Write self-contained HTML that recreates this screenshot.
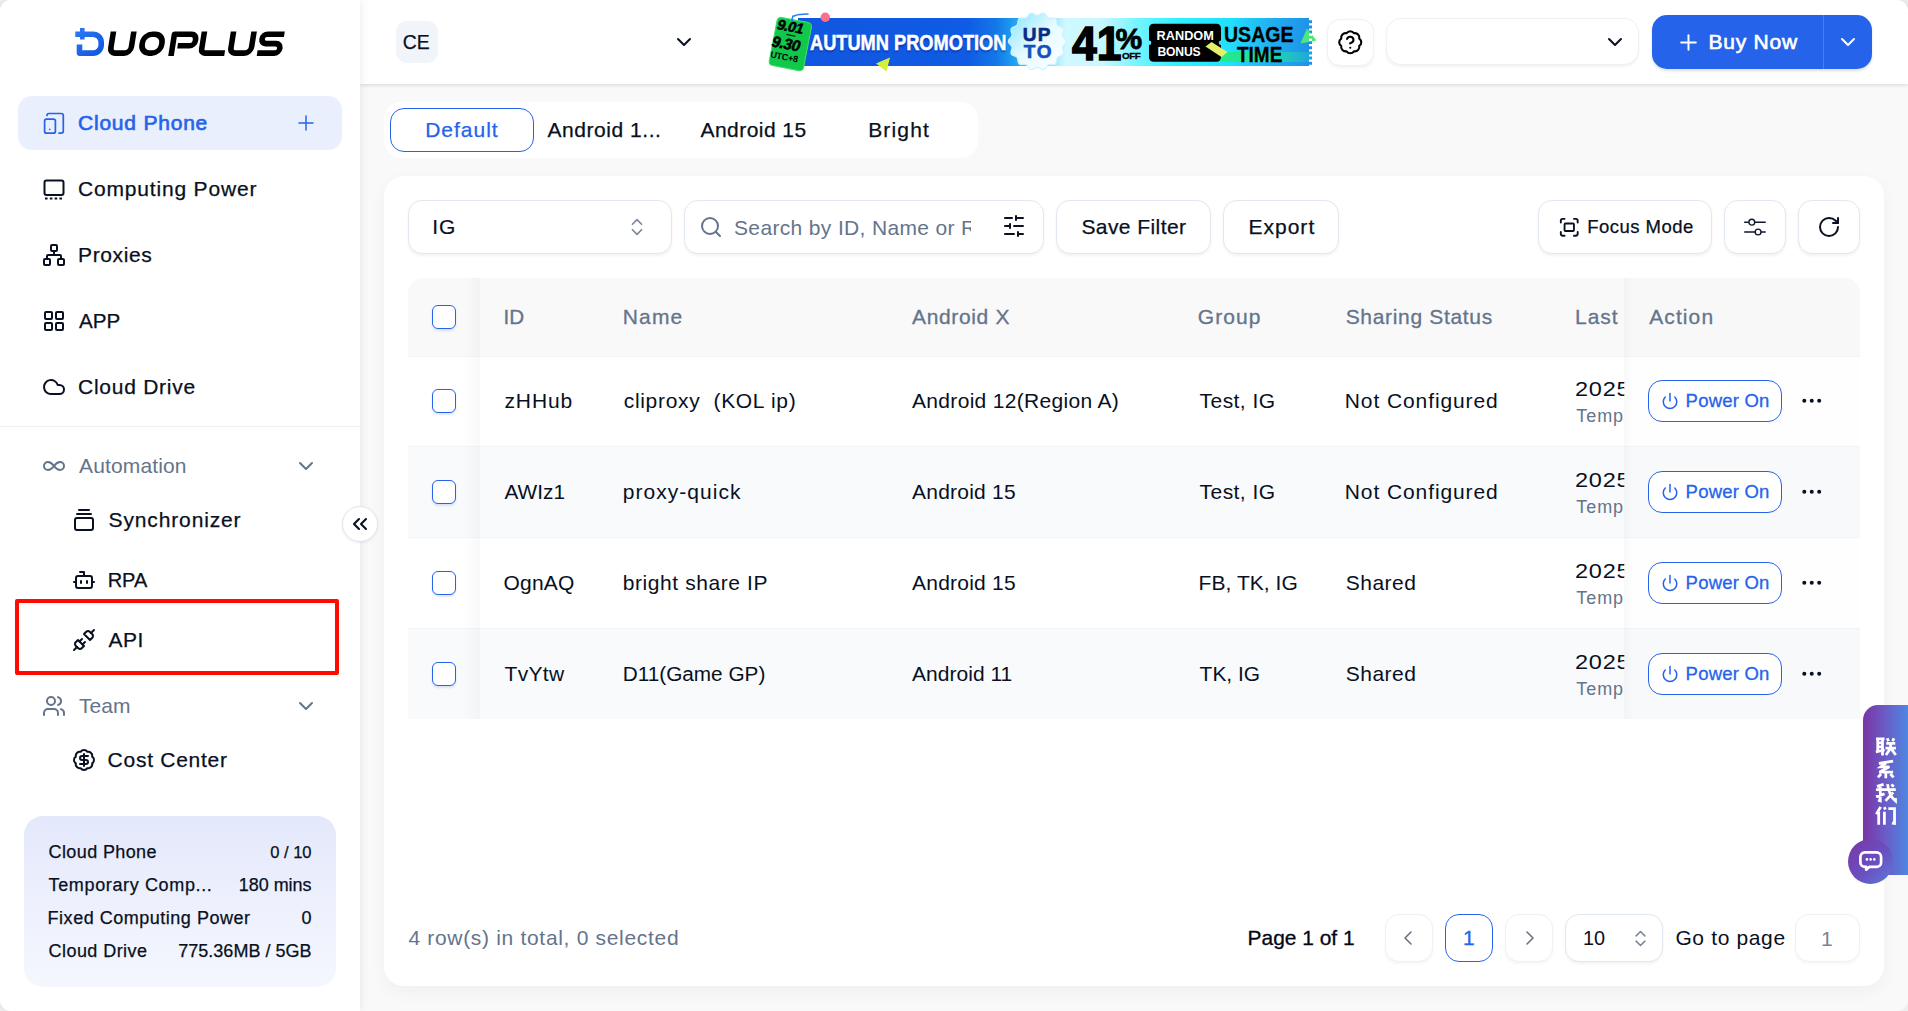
<!DOCTYPE html>
<html lang="en"><head><meta charset="utf-8"><title>DuoPlus Cloud Phone</title>
<style>
*{box-sizing:border-box;margin:0;padding:0}
html,body{width:1908px;height:1011px;overflow:hidden}
body{position:relative;background:#eeeeef;font-family:"Liberation Sans",sans-serif;color:#0f172a}
body div,body span,body svg,body aside,body header,body main,body section,body nav,body button,body footer{position:absolute;display:block}
.t{white-space:pre}
.ic{fill:none;stroke:currentColor;stroke-linecap:round;stroke-linejoin:round;overflow:visible}
.btn{background:#fff;border:1px solid #e2e8f0;border-radius:14px;box-shadow:0 1.5px 3px rgba(15,23,42,.05)}
.cb{width:24px;height:24px;border:1px solid #2563eb;border-radius:6px;background:#fff;box-shadow:0 1.5px 2px rgba(37,99,235,.15)}
</style></head>
<body>
<div style="left:0;top:0;width:1908px;height:1011px;background:#f9f9f9;border-radius:11px"></div>
<aside style="left:0;top:0;width:360px;height:1011px;z-index:2;background:#fff;border-radius:11px 0 0 11px;box-shadow:1px 0 9px rgba(0,0,0,.075)">
<svg style="left:70px;top:24px;width:224px;height:38px;overflow:visible" viewBox="70 24 224 38">
<defs><linearGradient id="lg" gradientUnits="userSpaceOnUse" x1="75" y1="28" x2="101" y2="56"><stop offset="0" stop-color="#2f7bf5"/><stop offset="1" stop-color="#0f55e0"/></linearGradient></defs>
<g fill="none" stroke="url(#lg)" stroke-width="5.6" stroke-linejoin="round">
<path d="M75.3 34.2H93a8.2 8.2 0 0 1 8.2 8.2v2.5a8.2 8.2 0 0 1-8.2 8.2H79.5V44.5"/>
<path d="M82.3 28V39.5" stroke-width="4.6"/>
</g>
<g fill="none" stroke="#000" stroke-width="5.6" stroke-linejoin="round" transform="translate(8.86 0) skewX(-9)">
<path d="M109.6 31.4V48a5 5 0 0 0 5 5.1H124a6 6 0 0 0 6-6V31.4"/>
<rect x="140.3" y="34.2" width="19.6" height="18.9" rx="8.5"/>
<path d="M171 55.9V34.2h17a5 5 0 0 1 5 5v1.5a5 5 0 0 1-5 5H176"/>
<path d="M200.6 31.4V49a4 4 0 0 0 4 4.1h19.6"/>
<path d="M229.7 31.4V48a5 5 0 0 0 5 5.1h9.5a6 6 0 0 0 6-6V31.4"/>
<path d="M280.9 34.2H263.9a4.5 4.5 0 0 0-4.5 4.5v0.4a4.5 4.5 0 0 0 4.5 4.5h10a4.7 4.7 0 0 1 4.7 4.7v0.1a4.7 4.7 0 0 1-4.7 4.7H256.7"/>
</g></svg>
<div style="left:18px;top:96px;width:324px;height:54px;background:#e9effd;border-radius:14px"></div>
<svg class="ic" style="left:42.00px;top:111.00px;width:24px;height:24px;color:#2563eb;" viewBox="0 0 24 24" stroke-width="1.7"><rect x="2.6" y="8.2" width="10.8" height="14" rx="2"/><path d="M5 4.5a2 2 0 0 1 2-2h12.3a2 2 0 0 1 2 2v15.6a2 2 0 0 1-2 2H17"/><path d="M7.7 18.3h.01"/></svg>
<span class="t" style="color:#2563eb;-webkit-text-stroke:0.65px #2563eb;font-size:21px;line-height:23px;letter-spacing:0.785px;left:78.00px;top:111.00px;">Cloud Phone</span>
<svg class="ic" style="left:294.00px;top:111.00px;width:24px;height:24px;color:#2563eb;" viewBox="0 0 24 24" stroke-width="1.5"><path d="M5 12h14"/><path d="M12 5v14"/></svg>
<svg class="ic" style="left:42.00px;top:177.00px;width:24px;height:24px;color:#081021;" viewBox="0 0 24 24" stroke-width="2"><rect x="2.5" y="3.5" width="19" height="14.5" rx="2"/><path d="M3 21.5h18" stroke-dasharray="2.6 2.2" stroke-linecap="butt"/></svg>
<span class="t" style="color:#081021;-webkit-text-stroke:0.25px #081021;font-size:21px;line-height:23px;letter-spacing:0.820px;left:78.00px;top:177.00px;">Computing Power</span>
<svg class="ic" style="left:42.00px;top:243.00px;width:24px;height:24px;color:#081021;" viewBox="0 0 24 24" stroke-width="2"><rect x="16" y="16" width="6" height="6" rx="1"/><rect x="2" y="16" width="6" height="6" rx="1"/><rect x="9" y="2" width="6" height="6" rx="1"/><path d="M5 16v-3a1 1 0 0 1 1-1h12a1 1 0 0 1 1 1v3"/><path d="M12 12V8"/></svg>
<span class="t" style="color:#081021;-webkit-text-stroke:0.25px #081021;font-size:21px;line-height:23px;letter-spacing:0.629px;left:78.00px;top:243.00px;">Proxies</span>
<svg class="ic" style="left:42.00px;top:309.00px;width:24px;height:24px;color:#081021;" viewBox="0 0 24 24" stroke-width="2"><rect width="7" height="7" x="3" y="3" rx="1"/><rect width="7" height="7" x="14" y="3" rx="1"/><rect width="7" height="7" x="14" y="14" rx="1"/><rect width="7" height="7" x="3" y="14" rx="1"/></svg>
<span class="t" style="color:#081021;-webkit-text-stroke:0.25px #081021;font-size:20.63px;line-height:23px;left:79.00px;top:309.00px;">APP</span>
<svg class="ic" style="left:42.00px;top:375.00px;width:24px;height:24px;color:#081021;" viewBox="0 0 24 24" stroke-width="2"><path d="M17.5 19H9a7 7 0 1 1 6.71-9h1.79a4.5 4.5 0 1 1 0 9Z"/></svg>
<span class="t" style="color:#081021;-webkit-text-stroke:0.25px #081021;font-size:21px;line-height:23px;letter-spacing:0.747px;left:78.00px;top:375.00px;">Cloud Drive</span>
<div style="left:0px;top:426px;width:360px;height:1px;background:#eef2f7"></div>
<svg class="ic" style="left:42.00px;top:454.00px;width:24px;height:24px;color:#64748b;" viewBox="0 0 24 24" stroke-width="2"><path d="M12 12c-2-2.67-4-4-6-4a4 4 0 1 0 0 8c2 0 4-1.33 6-4Zm0 0c2 2.67 4 4 6 4a4 4 0 0 0 0-8c-2 0-4 1.33-6 4Z"/></svg>
<span class="t" style="color:#64748b;font-size:21px;line-height:23px;letter-spacing:0.139px;left:79.00px;top:454.00px;">Automation</span>
<svg class="ic" style="left:294.00px;top:454.00px;width:24px;height:24px;color:#64748b;" viewBox="0 0 24 24" stroke-width="2"><path d="m6 9 6 6 6-6"/></svg>
<svg class="ic" style="left:72.00px;top:508.00px;width:24px;height:24px;color:#081021;" viewBox="0 0 24 24" stroke-width="2"><path d="M7 2h10"/><path d="M5 6h14"/><rect width="18" height="12" x="3" y="10" rx="2"/></svg>
<span class="t" style="color:#081021;-webkit-text-stroke:0.25px #081021;font-size:21px;line-height:23px;letter-spacing:0.858px;left:108.60px;top:508.00px;">Synchronizer</span>
<svg class="ic" style="left:72.00px;top:568.00px;width:24px;height:24px;color:#081021;" viewBox="0 0 24 24" stroke-width="2"><path d="M12 8V4H8"/><rect width="16" height="12" x="4" y="8" rx="2"/><path d="M2 14h2"/><path d="M20 14h2"/><path d="M15 13v2"/><path d="M9 13v2"/></svg>
<span class="t" style="color:#081021;-webkit-text-stroke:0.25px #081021;font-size:20.01px;line-height:22px;left:107.65px;top:569.00px;">RPA</span>
<svg class="ic" style="left:72.00px;top:628.00px;width:24px;height:24px;color:#081021;" viewBox="0 0 24 24" stroke-width="2"><path d="m19 5 3-3"/><path d="m2 22 3-3"/><path d="M6.3 20.3a2.4 2.4 0 0 0 3.4 0L12 18l-6-6-2.3 2.3a2.4 2.4 0 0 0 0 3.4Z"/><path d="M7.5 13.5 10 11"/><path d="M10.5 16.5 13 14"/><path d="m12 6 6 6 2.3-2.3a2.4 2.4 0 0 0 0-3.4l-2.6-2.6a2.4 2.4 0 0 0-3.4 0Z"/></svg>
<span class="t" style="color:#081021;-webkit-text-stroke:0.25px #081021;font-size:21px;line-height:23px;letter-spacing:0.493px;left:108.60px;top:628.00px;">API</span>
<svg class="ic" style="left:42.00px;top:694.00px;width:24px;height:24px;color:#64748b;" viewBox="0 0 24 24" stroke-width="2"><path d="M16 21v-2a4 4 0 0 0-4-4H6a4 4 0 0 0-4 4v2"/><circle cx="9" cy="7" r="4"/><path d="M22 21v-2a4 4 0 0 0-3-3.87"/><path d="M16 3.13a4 4 0 0 1 0 7.75"/></svg>
<span class="t" style="color:#64748b;font-size:21px;line-height:23px;letter-spacing:0.047px;left:79.00px;top:694.00px;">Team</span>
<svg class="ic" style="left:294.00px;top:694.00px;width:24px;height:24px;color:#64748b;" viewBox="0 0 24 24" stroke-width="2"><path d="m6 9 6 6 6-6"/></svg>
<svg class="ic" style="left:72.00px;top:748.00px;width:24px;height:24px;color:#081021;" viewBox="0 0 24 24" stroke-width="2"><path d="M3.85 8.62a4 4 0 0 1 4.78-4.77 4 4 0 0 1 6.74 0 4 4 0 0 1 4.78 4.78 4 4 0 0 1 0 6.74 4 4 0 0 1-4.77 4.78 4 4 0 0 1-6.75 0 4 4 0 0 1-4.78-4.77 4 4 0 0 1 0-6.76Z"/><path d="M16 8h-6a2 2 0 1 0 0 4h4a2 2 0 1 1 0 4H8"/><path d="M12 18V6"/></svg>
<span class="t" style="color:#081021;-webkit-text-stroke:0.25px #081021;font-size:21px;line-height:23px;letter-spacing:0.735px;left:107.60px;top:748.00px;">Cost Center</span>
<div style="left:15px;top:599px;width:324px;height:76px;border:4px solid #fe0a00;border-radius:2px"></div>
<div style="left:24px;top:816px;width:312px;height:171px;border-radius:19px;background:linear-gradient(180deg,#e3e8fb 0%,#eef1fd 55%,#f5f7fe 100%)"></div>
<span class="t" style="color:#081021;-webkit-text-stroke:0.25px #081021;font-size:18px;line-height:20px;letter-spacing:0.383px;left:48.60px;top:842.00px;">Cloud Phone</span>
<span class="t" style="color:#081021;-webkit-text-stroke:0.25px #081021;font-size:16.55px;line-height:19px;left:270.20px;top:843.00px;">0 / 10</span>
<span class="t" style="color:#081021;-webkit-text-stroke:0.25px #081021;font-size:18px;line-height:20px;letter-spacing:0.635px;left:48.60px;top:875.00px;">Temporary Comp...</span>
<span class="t" style="color:#081021;-webkit-text-stroke:0.25px #081021;font-size:17.97px;line-height:20px;left:238.70px;top:875.00px;">180 mins</span>
<span class="t" style="color:#081021;-webkit-text-stroke:0.25px #081021;font-size:18px;line-height:20px;letter-spacing:0.515px;left:47.60px;top:908.00px;">Fixed Computing Power</span>
<span class="t" style="color:#081021;-webkit-text-stroke:0.25px #081021;font-size:18px;line-height:20px;left:301.60px;top:908.00px;">0</span>
<span class="t" style="color:#081021;-webkit-text-stroke:0.25px #081021;font-size:18px;line-height:20px;letter-spacing:0.438px;left:48.60px;top:941.00px;">Cloud Drive</span>
<span class="t" style="color:#081021;-webkit-text-stroke:0.25px #081021;font-size:18px;line-height:20px;letter-spacing:0.025px;left:178.20px;top:941.00px;">775.36MB / 5GB</span>
</aside>
<div style="left:342px;top:506px;width:36px;height:36px;z-index:3;background:#fff;border:1px solid #dfe6f2;border-radius:50%;box-shadow:0 1px 3px rgba(15,23,42,.08)"></div>
<svg class="ic" style="left:348.20px;top:512.00px;width:24px;height:24px;color:#081021;z-index:3" viewBox="0 0 24 24" stroke-width="2.1"><path d="m11 17-5-5 5-5"/><path d="m18 17-5-5 5-5"/></svg>
<header style="left:0;top:0;width:0;height:0">
<div style="left:360px;top:0px;width:1548px;height:84px;background:#fff;border-radius:0 11px 0 0;box-shadow:0 1px 4px rgba(0,0,0,.15)"></div>
<div style="left:396px;top:21px;width:42px;height:42px;background:#f1f5f9;border-radius:11px"></div>
<span class="t" style="color:#081021;-webkit-text-stroke:0.25px #081021;font-size:19.39px;line-height:22px;left:402.78px;top:31.00px;">CE</span>
<svg class="ic" style="left:672.00px;top:30.00px;width:24px;height:24px;color:#081021;" viewBox="0 0 24 24" stroke-width="2"><path d="m6 9 6 6 6-6"/></svg>
<div style="left:768px;top:10px;width:548px;height:64px">
<div style="left:30px;top:8px;width:514px;height:48px;background:linear-gradient(90deg,#1257e0 0%,#0f5be3 33%,#1477e9 38.5%,#1d9af0 41.5%,#50c8f8 46%,#d0f8ff 52%,#c8f8ff 59%,#70f4ff 66.5%,#30f0ff 74%,#22e0ff 84%,#20b0f0 92%,#1e90e8 100%)"></div>
<div style="left:512px;top:41px;width:0;height:0"></div>
<div style="left:448px;top:42px;width:96px;height:10px;background:linear-gradient(90deg,#22ee88 0%,#22dd99 45%,rgba(34,200,200,.3) 100%)"></div>
<svg style="left:0;top:0;width:548px;height:64px;overflow:visible" viewBox="0 0 548 64">
<defs><linearGradient id="bg1" x1="0" y1="0" x2="1" y2="1"><stop offset="0" stop-color="#7fe3ff"/><stop offset=".5" stop-color="#e8fbff"/><stop offset="1" stop-color="#ffffff"/></linearGradient>
<linearGradient id="up1" x1="0" y1="0" x2="0" y2="1"><stop offset="0" stop-color="#081f6e"/><stop offset="1" stop-color="#1658c8"/></linearGradient></defs>
<g transform="rotate(11 22 33)"><rect x="5" y="9.5" width="35" height="49" rx="4" fill="#10c94a"/><rect x="5" y="9.5" width="35" height="49" rx="4" fill="none" stroke="#3fe06f" stroke-width="1"/></g>
<path d="M25 6c-2 4-1 9 4 10M26 6c4-2 9-2 14-2" fill="none" stroke="#2a7cf0" stroke-width="1.6" stroke-linecap="round"/>
<circle cx="57.3" cy="7.3" r="4.7" fill="#fb7088"/>
<path d="M108 53.5l14-6-3.5 14z" fill="#d8ef3a"/>
<path d="M532.5 33.5l6.5-15 9.5 12z" fill="#4fe878"/>
<path d="M298.2 31.3 L298.0 32.3 L297.5 33.3 L296.7 34.2 L295.9 35.0 L295.2 35.9 L294.7 36.7 L294.5 37.6 L294.6 38.6 L294.9 39.6 L295.3 40.8 L295.6 41.9 L295.6 43.0 L295.3 44.0 L294.6 44.8 L293.7 45.4 L292.6 45.8 L291.5 46.3 L290.5 46.7 L289.7 47.3 L289.2 48.0 L288.9 49.0 L288.7 50.1 L288.6 51.3 L288.3 52.4 L287.8 53.4 L287.1 54.1 L286.1 54.4 L285.0 54.6 L283.8 54.5 L282.6 54.4 L281.6 54.4 L280.7 54.6 L279.9 55.1 L279.2 55.8 L278.6 56.8 L277.9 57.8 L277.1 58.7 L276.3 59.3 L275.3 59.5 L274.3 59.4 L273.2 59.0 L272.1 58.4 L271.2 57.8 L270.2 57.4 L269.3 57.2 L268.4 57.4 L267.4 57.8 L266.5 58.4 L265.4 59.0 L264.3 59.4 L263.3 59.5 L262.3 59.3 L261.5 58.7 L260.7 57.8 L260.0 56.8 L259.4 55.8 L258.7 55.1 L257.9 54.6 L257.0 54.4 L256.0 54.4 L254.8 54.5 L253.6 54.6 L252.5 54.4 L251.5 54.1 L250.8 53.4 L250.3 52.4 L250.0 51.3 L249.9 50.1 L249.7 49.0 L249.4 48.0 L248.9 47.3 L248.1 46.7 L247.1 46.3 L246.0 45.8 L244.9 45.4 L244.0 44.8 L243.3 44.0 L243.0 43.0 L243.0 41.9 L243.3 40.8 L243.7 39.6 L244.0 38.6 L244.1 37.6 L243.9 36.7 L243.4 35.9 L242.7 35.0 L241.9 34.2 L241.1 33.3 L240.6 32.3 L240.4 31.3 L240.6 30.3 L241.1 29.3 L241.9 28.4 L242.7 27.6 L243.4 26.7 L243.9 25.9 L244.1 25.0 L244.0 24.0 L243.7 23.0 L243.3 21.8 L243.0 20.7 L243.0 19.6 L243.3 18.6 L244.0 17.8 L244.9 17.2 L246.0 16.8 L247.1 16.3 L248.1 15.9 L248.9 15.3 L249.4 14.6 L249.7 13.6 L249.9 12.5 L250.0 11.3 L250.3 10.2 L250.8 9.2 L251.5 8.5 L252.5 8.2 L253.6 8.0 L254.8 8.1 L256.0 8.2 L257.0 8.2 L257.9 8.0 L258.7 7.5 L259.4 6.8 L260.0 5.8 L260.7 4.8 L261.5 3.9 L262.3 3.3 L263.3 3.1 L264.3 3.2 L265.4 3.6 L266.5 4.2 L267.4 4.8 L268.4 5.2 L269.3 5.4 L270.2 5.2 L271.2 4.8 L272.1 4.2 L273.2 3.6 L274.3 3.2 L275.3 3.1 L276.3 3.3 L277.1 3.9 L277.9 4.8 L278.6 5.8 L279.2 6.8 L279.9 7.5 L280.7 8.0 L281.6 8.2 L282.6 8.2 L283.8 8.1 L285.0 8.0 L286.1 8.2 L287.1 8.5 L287.8 9.2 L288.3 10.2 L288.6 11.3 L288.7 12.5 L288.9 13.6 L289.2 14.6 L289.7 15.3 L290.5 15.9 L291.5 16.3 L292.6 16.8 L293.7 17.2 L294.6 17.8 L295.3 18.6 L295.6 19.6 L295.6 20.7 L295.3 21.8 L294.9 23.0 L294.6 24.0 L294.5 25.0 L294.7 25.9 L295.2 26.7 L295.9 27.6 L296.7 28.4 L297.5 29.3 L298.0 30.3Z" fill="url(#bg1)" stroke="#c9f3ff" stroke-width="1.2" stroke-linejoin="round"/>
<rect x="381" y="13.7" width="72" height="38" rx="4.5" fill="#000"/>
<circle cx="381" cy="32.7" r="2.3" fill="#5ff0ff"/><circle cx="453" cy="32.7" r="2.3" fill="#39d7f5"/>
<path d="M437.5 36.5l6-4.5 16 10-6 5z" fill="#e4f06a"/>
<path d="M542.5 8v48" stroke="#fff" stroke-width="3" stroke-dasharray="2.2 3" fill="none"/>
</svg>
</div>
<span class="t" style="color:#fff;font-weight:700;-webkit-text-stroke:0.5px #fff;text-shadow:0 1.5px 2px rgba(0,20,120,.45);font-size:21.5px;line-height:24px;transform:scaleX(0.8478);transform-origin:0 50%;left:809.50px;top:31.00px;">AUTUMN PROMOTION</span>
<span class="t" style="color:#0a2a86;font-weight:700;-webkit-text-stroke:0.6px #0a2a86;font-size:19px;line-height:21px;letter-spacing:1.279px;left:1022.80px;top:24.00px;">UP</span>
<span class="t" style="color:#1450bd;font-weight:700;-webkit-text-stroke:0.6px #1450bd;font-size:19px;line-height:21px;letter-spacing:1.737px;left:1023.80px;top:41.00px;">TO</span>
<span class="t" style="color:#000;font-weight:700;-webkit-text-stroke:1.6px #000;font-size:48.5px;line-height:54px;transform:scaleX(0.9174);transform-origin:0 50%;left:1071.80px;top:16.00px;">41</span>
<span class="t" style="color:#000;font-weight:700;-webkit-text-stroke:0.8px #000;font-size:30px;line-height:33px;left:1115.60px;top:22.00px;">%</span>
<span class="t" style="color:#000;font-weight:700;-webkit-text-stroke:0.3px #000;font-size:9.9px;line-height:11px;letter-spacing:-0.524px;left:1122.00px;top:50.00px;">OFF</span>
<span class="t" style="color:#fff;font-weight:700;font-size:12.72px;line-height:15px;left:1156.60px;top:28.00px;">RANDOM</span>
<span class="t" style="color:#fff;font-weight:700;font-size:12.15px;line-height:14px;letter-spacing:-0.143px;left:1157.40px;top:45.00px;">BONUS</span>
<span class="t" style="color:#000;font-weight:700;-webkit-text-stroke:0.3px #000;font-size:21.5px;line-height:24px;transform:scaleX(0.9092);transform-origin:0 50%;left:1224.09px;top:23.00px;">USAGE</span>
<span class="t" style="color:#000;font-weight:700;-webkit-text-stroke:0.3px #000;font-size:21.5px;line-height:24px;transform:scaleX(0.8821);transform-origin:0 50%;left:1237.00px;top:43.00px;">TIME</span>
<div style="left:769px;top:14px;width:44px;height:58px;transform:rotate(11deg)">
<span class="t" style="left:5px;top:6px;font-size:14.5px;line-height:14px;font-weight:700;font-style:italic;color:#000;letter-spacing:-.5px;-webkit-text-stroke:.5px #000">9.01</span>
<span style="left:16px;top:20.5px;width:9px;height:1.6px;background:#000"></span>
<span class="t" style="left:3px;top:23px;font-size:15.5px;line-height:15px;font-weight:700;font-style:italic;color:#000;letter-spacing:-.5px;-webkit-text-stroke:.5px #000">9.30</span>
<span class="t" style="left:4px;top:39.5px;font-size:9px;line-height:9px;font-weight:700;color:#000;letter-spacing:-.2px">UTC+8</span>
</div>
<div style="left:1327.3px;top:19px;width:46.5px;height:46.5px;background:#fff;border:1px solid #eef1f5;border-radius:13px;box-shadow:0 1.5px 3px rgba(15,23,42,.05)"></div>
<svg class="ic" style="left:1337.25px;top:28.95px;width:26.5px;height:26.5px;color:#000;" viewBox="0 0 24 24" stroke-width="1.9"><path d="M3.85 8.62a4 4 0 0 1 4.78-4.77 4 4 0 0 1 6.74 0 4 4 0 0 1 4.78 4.78 4 4 0 0 1 0 6.74 4 4 0 0 1-4.77 4.78 4 4 0 0 1-6.75 0 4 4 0 0 1-4.78-4.77 4 4 0 0 1 0-6.76Z"/><path d="M9.09 9a3 3 0 0 1 5.83 1c0 2-3 3-3 3"/><line x1="12" x2="12.01" y1="17" y2="17"/></svg>
<div style="left:1386.4px;top:18.2px;width:253px;height:47px;background:#fff;border:1px solid #eef1f5;border-radius:15px;box-shadow:0 1.5px 3px rgba(15,23,42,.05)"></div>
<svg class="ic" style="left:1602.70px;top:29.70px;width:24px;height:24px;color:#081021;" viewBox="0 0 24 24" stroke-width="2"><path d="m6 9 6 6 6-6"/></svg>
<div style="left:1652px;top:15px;width:220px;height:54px;background:#2563eb;border-radius:15px;box-shadow:0 2px 3px rgba(0,0,0,.13)"></div>
<div style="left:1822.5px;top:15px;width:1.5px;height:54px;background:#4b7ff0"></div>
<svg class="ic" style="left:1675.50px;top:29.50px;width:25px;height:25px;color:#fff;" viewBox="0 0 24 24" stroke-width="1.9"><path d="M5 12h14"/><path d="M12 5v14"/></svg>
<span class="t" style="color:#fff;-webkit-text-stroke:0.65px #fff;font-size:21px;line-height:23px;letter-spacing:0.772px;left:1708.50px;top:30.00px;">Buy Now</span>
<svg class="ic" style="left:1836.00px;top:29.60px;width:24px;height:24px;color:#fff;" viewBox="0 0 24 24" stroke-width="2"><path d="m6 9 6 6 6-6"/></svg>
</header>
<main style="left:0;top:0;width:0;height:0">
<div style="left:384px;top:102px;width:594px;height:56px;background:#fff;border-radius:17px"></div>
<div style="left:390px;top:108px;width:144px;height:44px;border:1px solid #2563eb;border-radius:14px;background:#fff"></div>
<span class="t" style="color:#2563eb;-webkit-text-stroke:0.25px #2563eb;font-size:21px;line-height:23px;letter-spacing:0.983px;left:425.20px;top:118.00px;">Default</span>
<span class="t" style="color:#081021;-webkit-text-stroke:0.25px #081021;font-size:21px;line-height:23px;letter-spacing:0.540px;left:547.50px;top:118.00px;">Android 1...</span>
<span class="t" style="color:#081021;-webkit-text-stroke:0.25px #081021;font-size:21px;line-height:23px;letter-spacing:0.456px;left:700.50px;top:118.00px;">Android 15</span>
<span class="t" style="color:#081021;-webkit-text-stroke:0.25px #081021;font-size:21px;line-height:23px;letter-spacing:1.155px;left:868.20px;top:118.00px;">Bright</span>
<div style="left:384px;top:176px;width:1500px;height:810px;background:#fff;border-radius:20px;box-shadow:0 6px 18px rgba(0,0,0,.04)"></div>
<div class="btn" style="left:408px;top:200px;width:264px;height:54px;"></div>
<span class="t" style="color:#081021;-webkit-text-stroke:0.2px #081021;font-size:21px;line-height:23px;letter-spacing:0.966px;left:432.20px;top:215.00px;">IG</span>
<svg class="ic" style="left:625.50px;top:216.30px;width:22px;height:22px;color:#7b8798;" viewBox="0 0 24 24" stroke-width="1.8"><path d="m7 15 5 5 5-5"/><path d="m7 9 5-5 5 5"/></svg>
<div class="btn" style="left:684px;top:200px;width:360px;height:54px;"></div>
<svg class="ic" style="left:699.00px;top:215.00px;width:24px;height:24px;color:#64748b;" viewBox="0 0 24 24" stroke-width="2"><circle cx="11" cy="11" r="8"/><path d="m21 21-4.3-4.3"/></svg>
<div style="left:733px;top:210px;width:238px;height:36px;overflow:hidden"><span class="t" style="left:1px;top:2.5px;font-size:21px;line-height:30px;color:#64748b;letter-spacing:0.35px">Search by ID, Name or Remark</span></div>
<svg class="ic" style="left:1002.00px;top:214.00px;width:24px;height:24px;color:#081021;" viewBox="0 0 24 24" stroke-width="2"><line x1="21" x2="14" y1="4" y2="4"/><line x1="10" x2="3" y1="4" y2="4"/><line x1="21" x2="12" y1="12" y2="12"/><line x1="8" x2="3" y1="12" y2="12"/><line x1="21" x2="16" y1="20" y2="20"/><line x1="12" x2="3" y1="20" y2="20"/><line x1="14" x2="14" y1="2" y2="6"/><line x1="8" x2="8" y1="10" y2="14"/><line x1="16" x2="16" y1="18" y2="22"/></svg>
<div class="btn" style="left:1056px;top:200px;width:155px;height:54px;"></div>
<span class="t" style="color:#081021;-webkit-text-stroke:0.25px #081021;font-size:21px;line-height:23px;letter-spacing:0.423px;left:1081.40px;top:215.00px;">Save Filter</span>
<div class="btn" style="left:1223px;top:200px;width:116px;height:54px;"></div>
<span class="t" style="color:#081021;-webkit-text-stroke:0.25px #081021;font-size:21px;line-height:23px;letter-spacing:1.028px;left:1248.40px;top:215.00px;">Export</span>
<div class="btn" style="left:1538px;top:200px;width:174px;height:54px;"></div>
<svg class="ic" style="left:1557.75px;top:215.75px;width:22.5px;height:22.5px;color:#081021;" viewBox="0 0 24 24" stroke-width="2"><path d="M3 7V5a2 2 0 0 1 2-2h2"/><path d="M17 3h2a2 2 0 0 1 2 2v2"/><path d="M21 17v2a2 2 0 0 1-2 2h-2"/><path d="M7 21H5a2 2 0 0 1-2-2v-2"/><rect width="10" height="8" x="7" y="8" rx="1"/></svg>
<span class="t" style="color:#081021;-webkit-text-stroke:0.25px #081021;font-size:18.5px;line-height:21px;letter-spacing:0.466px;left:1587.20px;top:216.00px;">Focus Mode</span>
<div class="btn" style="left:1724px;top:200px;width:62px;height:54px;"></div>
<svg class="ic" style="left:1743px;top:215px;width:24px;height:24px;color:#0f172a" viewBox="0 0 24 24" stroke-width="1.4"><path d="M1.7 7.2h20.5M1.7 17h20.5"/><circle cx="8.8" cy="7.2" r="2.9" fill="#fff"/><circle cx="15.1" cy="17" r="2.9" fill="#fff"/></svg>
<div class="btn" style="left:1798px;top:200px;width:62px;height:54px;"></div>
<svg class="ic" style="left:1817.00px;top:214.80px;width:24px;height:24px;color:#081021;" viewBox="0 0 24 24" stroke-width="2"><path d="M21 12a9 9 0 1 1-9-9c2.52 0 4.93 1 6.74 2.74L21 8"/><path d="M21 3v5h-5"/></svg>
<section style="left:408px;top:278px;width:1452px;height:441px;border-radius:15px 15px 0 0;overflow:hidden">
<div style="left:0;top:0;width:1452px;height:78px;background:#f9f9fa"></div>
<div style="left:0;top:78px;width:1452px;height:90px;background:#fff;border-top:1px solid #f1f4f8"></div>
<div style="left:0;top:168px;width:1452px;height:91px;background:#f8fafc;border-top:1px solid #f1f4f8"></div>
<div style="left:0;top:259px;width:1452px;height:91px;background:#fff;border-top:1px solid #f1f4f8"></div>
<div style="left:0;top:350px;width:1452px;height:91px;background:#f8fafc;border-top:1px solid #f1f4f8"></div>
</section>
<div style="left:408px;top:278px;width:72px;height:441px;border-radius:15px 0 0 0;background:linear-gradient(90deg,rgba(15,23,42,0) 0,rgba(15,23,42,0) 78%,rgba(15,23,42,.028) 100%)"></div>
<div style="left:1624.3px;top:278px;width:235.7px;height:441px;border-radius:0 15px 0 0;background:linear-gradient(90deg,rgba(15,23,42,.028) 0,rgba(15,23,42,.004) 10px,rgba(15,23,42,.004) 100%)"></div>
<span class="t" style="color:#64748b;-webkit-text-stroke:0.3px #64748b;font-size:20.65px;line-height:23px;left:503.52px;top:305.00px;">ID</span>
<span class="t" style="color:#64748b;-webkit-text-stroke:0.3px #64748b;font-size:21px;line-height:23px;letter-spacing:1.121px;left:622.80px;top:305.00px;">Name</span>
<span class="t" style="color:#64748b;-webkit-text-stroke:0.3px #64748b;font-size:21px;line-height:23px;letter-spacing:0.648px;left:912.00px;top:305.00px;">Android X</span>
<span class="t" style="color:#64748b;-webkit-text-stroke:0.3px #64748b;font-size:21px;line-height:23px;letter-spacing:1.078px;left:1197.80px;top:305.00px;">Group</span>
<span class="t" style="color:#64748b;-webkit-text-stroke:0.3px #64748b;font-size:21px;line-height:23px;letter-spacing:0.673px;left:1345.70px;top:305.00px;">Sharing Status</span>
<span class="t" style="color:#64748b;-webkit-text-stroke:0.3px #64748b;font-size:21px;line-height:23px;letter-spacing:0.981px;left:1575.00px;top:305.00px;">Last</span>
<span class="t" style="color:#64748b;-webkit-text-stroke:0.3px #64748b;font-size:21px;line-height:23px;letter-spacing:1.103px;left:1649.20px;top:305.00px;">Action</span>
<div class="cb" style="left:432px;top:305px;width:24px;height:24px;"></div>
<div class="cb" style="left:432px;top:389px;width:24px;height:24px;"></div>
<span class="t" style="color:#081021;font-size:21px;line-height:23px;letter-spacing:0.872px;left:504.50px;top:389.00px;">zHHub</span>
<span class="t" style="color:#081021;font-size:21px;line-height:23px;letter-spacing:0.692px;left:623.70px;top:389.00px;">cliproxy  (KOL ip)</span>
<span class="t" style="color:#081021;font-size:21px;line-height:23px;letter-spacing:0.318px;left:912.00px;top:389.00px;">Android 12(Region A)</span>
<span class="t" style="color:#081021;font-size:21px;line-height:23px;letter-spacing:0.440px;left:1199.60px;top:389.00px;">Test, IG</span>
<span class="t" style="color:#081021;font-size:21px;line-height:23px;letter-spacing:0.902px;left:1344.80px;top:389.00px;">Not Configured</span>
<span class="t" style="color:#081021;font-size:21px;line-height:23px;transform:scaleX(1.1200);transform-origin:0 50%;letter-spacing:0.679px;left:1575.48px;width:43.86px;overflow:hidden;top:377.00px;">2025-09</span>
<span class="t" style="color:#64748b;font-size:18px;line-height:20px;letter-spacing:0.922px;left:1576.30px;width:46.50px;overflow:hidden;top:406.00px;">Temporary</span>
<div style="left:1648px;top:379.8px;width:134px;height:42px;border:1px solid #2563eb;border-radius:14px;background:#fff"></div>
<svg class="ic" style="left:1661.00px;top:391.80px;width:18px;height:18px;color:#2563eb;" viewBox="0 0 24 24" stroke-width="2"><path d="M12 2v10"/><path d="M18.4 6.6a9 9 0 1 1-12.77.04"/></svg>
<span class="t" style="color:#2563eb;-webkit-text-stroke:0.3px #2563eb;font-size:18.5px;line-height:21px;letter-spacing:0.205px;left:1685.60px;top:390.00px;">Power On</span>
<svg class="ic" style="left:1799.25px;top:388.25px;width:25.5px;height:25.5px;color:#081021;" viewBox="0 0 24 24" stroke-width="1.8"><circle cx="12" cy="12" r="1"/><circle cx="19" cy="12" r="1"/><circle cx="5" cy="12" r="1"/></svg>
<div class="cb" style="left:432px;top:480px;width:24px;height:24px;"></div>
<span class="t" style="color:#081021;font-size:20.8px;line-height:23px;left:504.50px;top:480.00px;">AWIz1</span>
<span class="t" style="color:#081021;font-size:21px;line-height:23px;letter-spacing:1.043px;left:622.70px;top:480.00px;">proxy-quick</span>
<span class="t" style="color:#081021;font-size:21px;line-height:23px;letter-spacing:0.234px;left:912.00px;top:480.00px;">Android 15</span>
<span class="t" style="color:#081021;font-size:21px;line-height:23px;letter-spacing:0.440px;left:1199.60px;top:480.00px;">Test, IG</span>
<span class="t" style="color:#081021;font-size:21px;line-height:23px;letter-spacing:0.902px;left:1344.80px;top:480.00px;">Not Configured</span>
<span class="t" style="color:#081021;font-size:21px;line-height:23px;transform:scaleX(1.1200);transform-origin:0 50%;letter-spacing:0.679px;left:1575.48px;width:43.86px;overflow:hidden;top:468.00px;">2025-09</span>
<span class="t" style="color:#64748b;font-size:18px;line-height:20px;letter-spacing:0.922px;left:1576.30px;width:46.50px;overflow:hidden;top:497.00px;">Temporary</span>
<div style="left:1648px;top:470.8px;width:134px;height:42px;border:1px solid #2563eb;border-radius:14px;background:#fff"></div>
<svg class="ic" style="left:1661.00px;top:482.80px;width:18px;height:18px;color:#2563eb;" viewBox="0 0 24 24" stroke-width="2"><path d="M12 2v10"/><path d="M18.4 6.6a9 9 0 1 1-12.77.04"/></svg>
<span class="t" style="color:#2563eb;-webkit-text-stroke:0.3px #2563eb;font-size:18.5px;line-height:21px;letter-spacing:0.205px;left:1685.60px;top:481.00px;">Power On</span>
<svg class="ic" style="left:1799.25px;top:479.25px;width:25.5px;height:25.5px;color:#081021;" viewBox="0 0 24 24" stroke-width="1.8"><circle cx="12" cy="12" r="1"/><circle cx="19" cy="12" r="1"/><circle cx="5" cy="12" r="1"/></svg>
<div class="cb" style="left:432px;top:571px;width:24px;height:24px;"></div>
<span class="t" style="color:#081021;font-size:21px;line-height:23px;letter-spacing:0.200px;left:503.50px;top:571.00px;">OgnAQ</span>
<span class="t" style="color:#081021;font-size:21px;line-height:23px;letter-spacing:0.588px;left:622.70px;top:571.00px;">bright share IP</span>
<span class="t" style="color:#081021;font-size:21px;line-height:23px;letter-spacing:0.234px;left:912.00px;top:571.00px;">Android 15</span>
<span class="t" style="color:#081021;font-size:21px;line-height:23px;letter-spacing:0.040px;left:1198.60px;top:571.00px;">FB, TK, IG</span>
<span class="t" style="color:#081021;font-size:21px;line-height:23px;letter-spacing:0.472px;left:1345.80px;top:571.00px;">Shared</span>
<span class="t" style="color:#081021;font-size:21px;line-height:23px;transform:scaleX(1.1200);transform-origin:0 50%;letter-spacing:0.679px;left:1575.48px;width:43.86px;overflow:hidden;top:559.00px;">2025-09</span>
<span class="t" style="color:#64748b;font-size:18px;line-height:20px;letter-spacing:0.922px;left:1576.30px;width:46.50px;overflow:hidden;top:588.00px;">Temporary</span>
<div style="left:1648px;top:561.8px;width:134px;height:42px;border:1px solid #2563eb;border-radius:14px;background:#fff"></div>
<svg class="ic" style="left:1661.00px;top:573.80px;width:18px;height:18px;color:#2563eb;" viewBox="0 0 24 24" stroke-width="2"><path d="M12 2v10"/><path d="M18.4 6.6a9 9 0 1 1-12.77.04"/></svg>
<span class="t" style="color:#2563eb;-webkit-text-stroke:0.3px #2563eb;font-size:18.5px;line-height:21px;letter-spacing:0.205px;left:1685.60px;top:572.00px;">Power On</span>
<svg class="ic" style="left:1799.25px;top:570.25px;width:25.5px;height:25.5px;color:#081021;" viewBox="0 0 24 24" stroke-width="1.8"><circle cx="12" cy="12" r="1"/><circle cx="19" cy="12" r="1"/><circle cx="5" cy="12" r="1"/></svg>
<div class="cb" style="left:432px;top:662px;width:24px;height:24px;"></div>
<span class="t" style="color:#081021;font-size:21px;line-height:23px;letter-spacing:0.333px;left:504.50px;top:662.00px;">TvYtw</span>
<span class="t" style="color:#081021;font-size:20.75px;line-height:23px;left:622.71px;top:662.00px;">D11(Game GP)</span>
<span class="t" style="color:#081021;font-size:21px;line-height:23px;letter-spacing:0.029px;left:912.00px;top:662.00px;">Android 11</span>
<span class="t" style="color:#081021;font-size:20.95px;line-height:23px;left:1199.60px;top:662.00px;">TK, IG</span>
<span class="t" style="color:#081021;font-size:21px;line-height:23px;letter-spacing:0.472px;left:1345.80px;top:662.00px;">Shared</span>
<span class="t" style="color:#081021;font-size:21px;line-height:23px;transform:scaleX(1.1200);transform-origin:0 50%;letter-spacing:0.679px;left:1575.48px;width:43.86px;overflow:hidden;top:650.00px;">2025-09</span>
<span class="t" style="color:#64748b;font-size:18px;line-height:20px;letter-spacing:0.922px;left:1576.30px;width:46.50px;overflow:hidden;top:679.00px;">Temporary</span>
<div style="left:1648px;top:652.8px;width:134px;height:42px;border:1px solid #2563eb;border-radius:14px;background:#fff"></div>
<svg class="ic" style="left:1661.00px;top:664.80px;width:18px;height:18px;color:#2563eb;" viewBox="0 0 24 24" stroke-width="2"><path d="M12 2v10"/><path d="M18.4 6.6a9 9 0 1 1-12.77.04"/></svg>
<span class="t" style="color:#2563eb;-webkit-text-stroke:0.3px #2563eb;font-size:18.5px;line-height:21px;letter-spacing:0.205px;left:1685.60px;top:663.00px;">Power On</span>
<svg class="ic" style="left:1799.25px;top:661.25px;width:25.5px;height:25.5px;color:#081021;" viewBox="0 0 24 24" stroke-width="1.8"><circle cx="12" cy="12" r="1"/><circle cx="19" cy="12" r="1"/><circle cx="5" cy="12" r="1"/></svg>
<span class="t" style="color:#64748b;font-size:21px;line-height:23px;letter-spacing:0.687px;left:408.40px;top:926.00px;">4 row(s) in total, 0 selected</span>
<span class="t" style="color:#020617;-webkit-text-stroke:0.3px #020617;font-size:20.93px;line-height:23px;left:1247.60px;top:926.00px;">Page 1 of 1</span>
<div style="left:1385px;top:914px;width:48px;height:48px;border:1px solid #eef1f5;border-radius:14px;background:#fff;box-shadow:0 1.5px 3px rgba(15,23,42,.04)"></div>
<svg class="ic" style="left:1396.00px;top:926.00px;width:24px;height:24px;color:#6b7280;" viewBox="0 0 24 24" stroke-width="1.6"><path d="m15 18-6-6 6-6"/></svg>
<div style="left:1445px;top:914px;width:48px;height:48px;border:1px solid #2563eb;border-radius:14px;background:#fff"></div>
<span class="t" style="color:#2563eb;-webkit-text-stroke:0.3px #2563eb;font-size:21px;line-height:23px;left:1463.00px;top:926.00px;">1</span>
<div style="left:1505px;top:914px;width:48px;height:48px;border:1px solid #eef1f5;border-radius:14px;background:#fff;box-shadow:0 1.5px 3px rgba(15,23,42,.04)"></div>
<svg class="ic" style="left:1517.50px;top:926.00px;width:24px;height:24px;color:#6b7280;" viewBox="0 0 24 24" stroke-width="1.6"><path d="m9 18 6-6-6-6"/></svg>
<div style="left:1565px;top:914px;width:98px;height:48px;border:1px solid #e2e8f0;border-radius:14px;background:#fff;box-shadow:0 1.5px 3px rgba(15,23,42,.05)"></div>
<span class="t" style="color:#081021;font-size:19.86px;line-height:22px;left:1583.05px;top:927.00px;">10</span>
<svg class="ic" style="left:1629.80px;top:928.10px;width:21px;height:21px;color:#7b8798;" viewBox="0 0 24 24" stroke-width="1.8"><path d="m7 15 5 5 5-5"/><path d="m7 9 5-5 5 5"/></svg>
<span class="t" style="color:#081021;font-size:21px;line-height:23px;letter-spacing:0.641px;left:1675.40px;top:926.00px;">Go to page</span>
<div style="left:1795px;top:914px;width:65px;height:48px;border:1px solid #eef1f5;border-radius:14px;background:#fff;box-shadow:0 1.5px 3px rgba(15,23,42,.04)"></div>
<span class="t" style="color:#7b8495;font-size:21px;line-height:23px;left:1821.00px;top:927.00px;">1</span>
</main>
<div style="left:1863px;top:705px;width:45px;height:170px;border-radius:15px 0 0 15px;background:linear-gradient(90deg,#7a35a5 0%,#6b5cc6 50%,#4f87e1 100%)"></div>
<div style="left:1847.8px;top:839.2px;width:45px;height:45px;border-radius:50%;background:linear-gradient(135deg,#7a37a6 0%,#6a4fc0 55%,#5b7edb 100%)"></div>
<svg style="left:1875px;top:734.6px;width:22px;height:93px;overflow:visible" viewBox="-0.6 0 23.2 93" fill="none" stroke="#fff" stroke-width="2.9" stroke-linecap="butt" stroke-linejoin="miter">
<g><path d="M0.5 1.5H9.5M2.3 1.5V14.3M7.3 1.5V19M2.3 5.8H7.3M2.3 10H7.3M0.3 15.2L9.6 13.3"/><path d="M12.3 0.8L13.6 4M19.3 0.8L18 4M11.3 6.3H20.8M10.5 11.2H21.5M15.9 6.3V11.2L11 18.6M16.2 11.6L21.3 18.6"/></g>
<g transform="translate(0 24)"><path d="M3.5 3.4L18.5 1M11.5 2.6L5.5 7H14.5L4 12.6H18.5M10.8 12.6V19M5.8 14.6L2.5 18.2M15.6 14.6L19 18.2"/></g>
<g transform="translate(0 48.5)"><path d="M1.5 3.2L8.5 1M0.5 6.5H21.3M5 2.5V18.4L2.6 17.6M0.5 14L9.5 11M12.6 0.8C13.5 8 16 14.5 21 18.6V15.5M18.6 9.5L10.5 18.5M16.5 1.2L19.3 3.4"/></g>
<g transform="translate(0 72.5)"><path d="M5.3 0.8L0.8 8.5M3.3 6V19.5M9 1.2L10.6 3.6M9.3 5.8V19.5M13.5 2.5H20V18.2L17.3 17.8"/></g>
</svg>
<svg style="left:1857.6px;top:849px;width:26px;height:24px;overflow:visible" viewBox="0 0 26 24" fill="none" stroke="#fff" stroke-width="2.7" stroke-linejoin="round" stroke-linecap="round">
<path d="M7 3.3H18.5a4.6 4.6 0 0 1 4.6 4.6v5.3a4.6 4.6 0 0 1-4.6 4.6H11.5L8.2 20.6V17.8H7a4.6 4.6 0 0 1-4.6-4.6V7.9A4.6 4.6 0 0 1 7 3.3Z"/>
<path d="M8.9 10.4h.01M12.6 10.4h.01M16.3 10.4h.01" stroke-width="2.6"/></svg>
</body></html>
